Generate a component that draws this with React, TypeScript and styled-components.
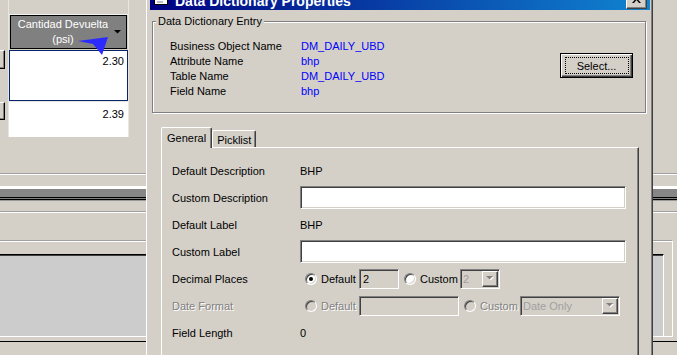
import React from "react";
import styled, { createGlobalStyle, css } from "styled-components";

const GlobalStyle = createGlobalStyle`
  * { box-sizing: border-box; }
  html, body {
    margin: 0;
    padding: 0;
    width: 677px;
    height: 355px;
    overflow: hidden;
    background: #d4d0c8;
  }
  body {
    font-family: "Liberation Sans", Arial, sans-serif;
    font-size: 11px;
    color: #000;
  }
`;

const face = "#d4d0c8";

const sunken = css`
  border: 1px solid;
  border-color: #808080 #fff #fff #808080;
  box-shadow: inset 1px 1px 0 #404040, inset -1px -1px 0 ${face};
`;

const raised = css`
  border: 1px solid;
  border-color: #fff #404040 #404040 #fff;
  box-shadow: inset -1px -1px 0 #808080;
`;

const Desktop = styled.div`
  position: relative;
  width: 677px;
  height: 355px;
  overflow: hidden;
  background: ${face};
`;

/* ---------- application behind the dialog ---------- */

const BackApp = styled.div`
  display: flex;
  flex-direction: column;
  width: 677px;
  height: 355px;
`;

const GridArea = styled.div`
  display: flex;
  height: 173px;
  flex: none;
`;

const RowHeaders = styled.div`
  width: 8px;
  display: flex;
  flex-direction: column;
  padding-top: 50px;
`;

const RowStub = styled.div<{ $h: number; $gap?: number }>`
  width: 5px;
  height: ${p => p.$h}px;
  margin-top: ${p => p.$gap ?? 0}px;
  background: ${face};
  border-right: 1px solid #000;
  border-bottom: 1px solid #000;
  border-top: 1px solid #fff;
  box-shadow: inset -1px -1px 0 #808080;
`;

const GridColumn = styled.div`
  width: 121px;
  height: 137px;
  display: flex;
  flex-direction: column;
  border-left: 1px solid #e6e6e6;
  border-right: 1px solid #e6e6e6;
  padding-top: 14px;
`;

const ColumnHeader = styled.div`
  border-top: 1px solid #f2f2f2;
  padding: 0 1px;
`;

const HeaderFace = styled.div`
  height: 34px;
  display: flex;
  align-items: center;
  background: #808080;
  border: 1px solid #000;
  color: #fff;
  padding-right: 4px;
`;

const HeaderText = styled.div`
  flex: 1;
  text-align: center;
  line-height: 15px;
  padding-left: 1px;
`;

const Cell = styled.div<{ $selected?: boolean; $h: number; $pt: number }>`
  height: ${p => p.$h}px;
  background: #fff;
  text-align: right;
  padding: ${p => p.$pt}px 3px 0 0;
  line-height: 13px;
  border: 1px solid ${p => (p.$selected ? "#0a246a" : "transparent")};
  border-top-color: ${p => (p.$selected ? "#0a246a" : "#e6e6e6")};
`;

const Rule = styled.div<{ $top: number }>`
  flex: none;
  margin-top: ${p => p.$top}px;
  height: 2px;
  border-top: 1px solid #a0a0a0;
  border-bottom: 1px solid #fff;
`;

const CaptionBand = styled.div`
  flex: none;
  margin-top: 11px;
  height: 11px;
  border-top: 3px solid #fff;
  background: #868686;
  box-shadow: 0 1px 0 #000, 0 2px 0 #808080, 0 3px 0 #000, 0 4px 0 #9a9a9a;
`;

const OuterFrame = styled.div`
  flex: none;
  margin-top: 27px;
  width: 673px;
  height: 97px;
  border-top: 1px solid #a0a0a0;
  border-right: 1px solid #fff;
  border-bottom: 1px solid #fff;
  box-shadow: inset 0 1px 0 #fff;
  padding-top: 13px;
`;

const InnerFrame = styled.div`
  width: 664px;
  height: 82px;
  background: #cccccc;
  border-top: 1px solid #000;
  border-right: 1px solid #fff;
  box-shadow: inset 0 1px 0 #404040;
`;

const DarkLine = styled.div`
  flex: none;
  margin-top: 4px;
  height: 1px;
  background: #000;
`;

const Pointer = styled.svg`
  position: absolute;
  left: 76px;
  top: 35px;
`;

/* ---------- dialog window ---------- */

const Window = styled.div`
  position: absolute;
  left: 146px;
  top: -13px;
  width: 507px;
  height: 380px;
  display: flex;
  flex-direction: column;
  background: ${face};
  border-left: 1px solid #fff;
  border-top: 1px solid #fff;
  border-right: 1px solid #404040;
  box-shadow: inset -1px 0 0 #808080;
  padding: 0 2px 0 3px;
`;

const TitleBar = styled.div`
  flex: none;
  height: 22px;
  display: flex;
  align-items: center;
  padding: 0 3px;
  background: linear-gradient(to right, #000080, #1084d0);
  color: #fff;
`;

const TitleText = styled.div`
  margin-left: 6px;
  padding-top: 3px;
  font-size: 14px;
  font-weight: bold;
  line-height: 18px;
  white-space: nowrap;
`;

const CloseButton = styled.div`
  margin-left: auto;
  width: 21px;
  height: 19px;
  display: flex;
  align-items: center;
  justify-content: center;
  background: ${face};
  ${raised};
`;

const DialogBody = styled.div`
  flex: 1;
  display: flex;
  flex-direction: column;
  padding-left: 2px;
  min-height: 0;
`;

const GroupBox = styled.fieldset`
  margin: 5px 4px 0 0;
  padding: 0;
  min-width: 0;
  border: 1px solid #808080;
  box-shadow: 1px 1px 0 #fff, inset 1px 1px 0 #fff;
`;

const GroupLegend = styled.legend`
  margin-left: 3px;
  padding: 0 2px;
  line-height: 13px;
  background: ${face};
`;

const GroupContent = styled.div`
  display: flex;
  align-items: flex-start;
  padding: 11px 12px 13px 17px;
`;

const InfoList = styled.div`
  display: flex;
  flex-direction: column;
`;

const InfoRow = styled.div`
  display: flex;
  height: 15px;
  line-height: 15px;
`;

const InfoLabel = styled.div`
  width: 131px;
`;

const InfoValue = styled.div`
  color: #0000ff;
`;

const PushButton = styled.div`
  position: relative;
  margin: 14px 0 0 auto;
  width: 73px;
  height: 25px;
  display: flex;
  align-items: center;
  justify-content: center;
  background: ${face};
  border: 1px solid #000;
  box-shadow: inset 1px 1px 0 #fff, inset -1px -1px 0 #404040, inset -2px -2px 0 #808080;
  &::after {
    content: "";
    position: absolute;
    left: 4px;
    right: 3px;
    top: 3px;
    bottom: 3px;
    border: 1px dotted #000;
  }
`;

const TabStrip = styled.div`
  flex: none;
  display: flex;
  align-items: flex-end;
  height: 20px;
  margin: 14px 0 0 9px;
`;

const Tab = styled.div<{ $active?: boolean }>`
  position: relative;
  z-index: ${p => (p.$active ? 1 : 0)};
  height: ${p => (p.$active ? 21 : 17)}px;
  margin-bottom: ${p => (p.$active ? -1 : 0)}px;
  padding: ${p => (p.$active ? "4px 5px 0" : "3px 4px 0")};
  line-height: 13px;
  background: ${face};
  border-left: 1px solid #fff;
  border-top: 1px solid #fff;
  border-right: 1px solid #404040;
  border-radius: 2px 2px 0 0;
  box-shadow: inset -1px 0 0 #808080;
`;

const TabPanel = styled.div`
  flex: 1;
  margin: 0 11px 0 9px;
  padding: 9px 0 0 10px;
  border-left: 1px solid #fff;
  border-top: 1px solid #fff;
  border-right: 1px solid #404040;
  box-shadow: inset -1px 0 0 #808080;
`;

const FormRow = styled.div`
  display: flex;
  align-items: center;
  height: 27px;
`;

const disabledText = css`
  color: #808080;
  text-shadow: 1px 1px 0 #fff;
`;

const FormLabel = styled.div<{ $disabled?: boolean }>`
  width: 128px;
  flex: none;
  ${p => p.$disabled && disabledText};
`;

const TextField = styled.div<{ $w: number; $h: number; $disabled?: boolean }>`
  flex: none;
  width: ${p => p.$w}px;
  height: ${p => p.$h}px;
  padding-left: 3px;
  line-height: ${p => p.$h - 2}px;
  background: ${p => (p.$disabled ? face : "#fff")};
  ${sunken};
`;

const Option = styled.div<{ $w: number; $ml: number; $disabled?: boolean }>`
  flex: none;
  display: flex;
  align-items: center;
  width: ${p => p.$w}px;
  margin-left: ${p => p.$ml}px;
  ${p => p.$disabled && disabledText};
`;

const Radio = styled.span<{ $checked?: boolean; $disabled?: boolean }>`
  position: relative;
  flex: none;
  width: 12px;
  height: 12px;
  margin-right: 4px;
  border-radius: 50%;
  border: 1px solid;
  border-color: #808080 #fff #fff #808080;
  background: ${p => (p.$disabled ? face : "#fff")};
  box-shadow: inset 1px 1px 0 #404040, inset -1px -1px 0 ${face};
  &::after {
    content: "";
    display: ${p => (p.$checked ? "block" : "none")};
    position: absolute;
    left: 3px;
    top: 3px;
    width: 4px;
    height: 4px;
    border-radius: 50%;
    background: #000;
  }
`;

const Combo = styled.div<{ $w: number }>`
  flex: none;
  display: flex;
  align-items: center;
  width: ${p => p.$w}px;
  height: 20px;
  padding: 1px;
  background: ${face};
  ${sunken};
`;

const ComboText = styled.div`
  flex: 1;
  padding-left: 1px;
  color: #a0a0a0;
  line-height: 16px;
`;

const ComboButton = styled.div`
  flex: none;
  width: 16px;
  height: 16px;
  display: flex;
  align-items: center;
  justify-content: center;
  background: ${face};
  ${raised};
`;

function WindowIcon() {
  return (
    <svg width="16" height="16" viewBox="0 0 16 16">
      <rect x="1.5" y="2.5" width="13" height="11" fill="#fff" stroke="#000" />
      <rect x="2" y="3" width="12" height="2" fill="#000080" />
      <line x1="4" y1="8.5" x2="12" y2="8.5" stroke="#000" />
      <line x1="4" y1="11" x2="10" y2="11" stroke="#808080" />
    </svg>
  );
}

function CloseGlyph() {
  return (
    <svg width="9" height="8" viewBox="0 0 9 8">
      <path d="M0 0h2l2.5 3 2.5-3h2L5.5 4 9 8H7L4.5 5 2 8H0l3.5-4z" fill="#000" />
    </svg>
  );
}

function DownArrow({ color, shadow }: { color: string; shadow?: boolean }) {
  return (
    <svg width="8" height="5" viewBox="0 0 8 5">
      {shadow && <path d="M1 1h7L4.5 4.5z" fill="#fff" />}
      <path d="M0 0h7L3.5 3.5z" fill={color} />
    </svg>
  );
}

const entryRows = [
  { label: "Business Object Name", value: "DM_DAILY_UBD" },
  { label: "Attribute Name", value: "bhp" },
  { label: "Table Name", value: "DM_DAILY_UBD" },
  { label: "Field Name", value: "bhp" },
];

function BackgroundApp() {
  return (
    <BackApp>
      <GridArea>
        <RowHeaders>
          <RowStub $h={19} />
          <RowStub $h={18} $gap={33} />
        </RowHeaders>
        <GridColumn>
          <ColumnHeader>
            <HeaderFace>
              <HeaderText>
                Cantidad Devuelta
                <br />
                (psi)
              </HeaderText>
              <DownArrow color="#000" />
            </HeaderFace>
          </ColumnHeader>
          <Cell $selected $h={51} $pt={4} style={{ marginTop: 1 }}>
            2.30
          </Cell>
          <Cell $h={36} $pt={6}>
            2.39
          </Cell>
        </GridColumn>
      </GridArea>
      <Rule $top={0} />
      <CaptionBand />
      <Rule $top={14} />
      <OuterFrame>
        <InnerFrame />
      </OuterFrame>
      <DarkLine />
    </BackApp>
  );
}

function PropertiesDialog() {
  return (
    <Window>
      <TitleBar>
        <WindowIcon />
        <TitleText>Data Dictionary Properties</TitleText>
        <CloseButton>
          <CloseGlyph />
        </CloseButton>
      </TitleBar>
      <DialogBody>
        <GroupBox>
          <GroupLegend>Data Dictionary Entry</GroupLegend>
          <GroupContent>
            <InfoList>
              {entryRows.map(r => (
                <InfoRow key={r.label}>
                  <InfoLabel>{r.label}</InfoLabel>
                  <InfoValue>{r.value}</InfoValue>
                </InfoRow>
              ))}
            </InfoList>
            <PushButton>Select...</PushButton>
          </GroupContent>
        </GroupBox>

        <TabStrip>
          <Tab $active>General</Tab>
          <Tab>Picklist</Tab>
        </TabStrip>
        <TabPanel>
          <FormRow>
            <FormLabel>Default Description</FormLabel>
            <div>BHP</div>
          </FormRow>
          <FormRow>
            <FormLabel>Custom Description</FormLabel>
            <TextField $w={326} $h={23} />
          </FormRow>
          <FormRow>
            <FormLabel>Default Label</FormLabel>
            <div>BHP</div>
          </FormRow>
          <FormRow>
            <FormLabel>Custom Label</FormLabel>
            <TextField $w={326} $h={23} />
          </FormRow>
          <FormRow>
            <FormLabel>Decimal Places</FormLabel>
            <Option $w={54} $ml={5}>
              <Radio $checked />
              Default
            </Option>
            <TextField $w={40} $h={20} $disabled>
              2
            </TextField>
            <Option $w={56} $ml={5}>
              <Radio />
              Custom
            </Option>
            <Combo $w={40}>
              <ComboText>2</ComboText>
              <ComboButton>
                <DownArrow color="#808080" shadow />
              </ComboButton>
            </Combo>
          </FormRow>
          <FormRow>
            <FormLabel $disabled>Date Format</FormLabel>
            <Option $w={54} $ml={5} $disabled>
              <Radio $disabled />
              Default
            </Option>
            <TextField $w={100} $h={20} $disabled />
            <Option $w={56} $ml={5} $disabled>
              <Radio $disabled />
              Custom
            </Option>
            <Combo $w={100}>
              <ComboText>Date Only</ComboText>
              <ComboButton>
                <DownArrow color="#808080" shadow />
              </ComboButton>
            </Combo>
          </FormRow>
          <FormRow>
            <FormLabel>Field Length</FormLabel>
            <div>0</div>
          </FormRow>
        </TabPanel>
      </DialogBody>
    </Window>
  );
}

export default function App() {
  return (
    <Desktop>
      <GlobalStyle />
      <BackgroundApp />
      <Pointer width="34" height="22" viewBox="0 0 34 22">
        <polygon points="2,6 32,2 26,20 17,9" fill="#2b2bff" />
      </Pointer>
      <PropertiesDialog />
    </Desktop>
  );
}
